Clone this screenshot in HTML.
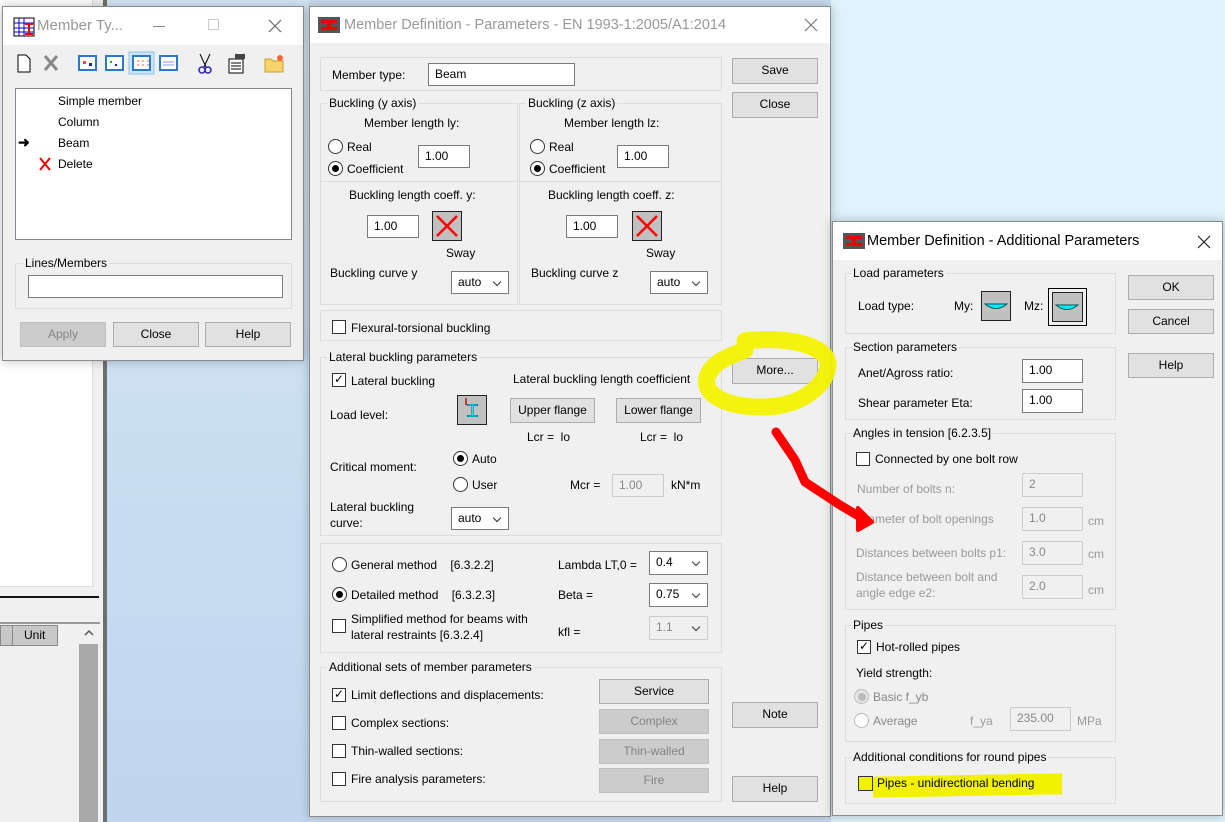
<!DOCTYPE html>
<html><head><meta charset="utf-8"><style>
*{box-sizing:border-box;margin:0;padding:0}
body{width:1225px;height:822px;position:relative;overflow:hidden;font-family:"Liberation Sans",Tahoma,sans-serif;font-size:12px;color:#000;background:#dff3fc}
.a{position:absolute}
.t{position:absolute;white-space:nowrap;line-height:14px}
.g{position:absolute;border:1px solid #dcdcdc}
.lg{position:absolute;background:#f0f0f0;padding:0 2px;line-height:14px;white-space:nowrap}
.in{position:absolute;background:#fff;border:1px solid #7a7a7a;line-height:20px;padding-left:6px}
.dis{background:#f0f0f0;border-color:#ccc;color:#888}
.btn{position:absolute;background:#e1e1e1;border:1px solid #adadad;text-align:center;line-height:22px}
.bd{background:#cccccc;border-color:#bfbfbf;color:#838383}
.cb{position:absolute;width:14px;height:14px;border:1px solid #333;background:#fff}
.rb{position:absolute;width:15px;height:15px;border:1px solid #333;border-radius:50%;background:#fff}
.rb.on::after{content:"";position:absolute;left:3px;top:3px;width:7px;height:7px;border-radius:50%;background:#000}
.sel{position:absolute;background:#fff;border:1px solid #7a7a7a;line-height:21px;padding-left:6px}
.sel::after{content:"";position:absolute;right:8px;top:7px;width:5px;height:5px;border-right:1px solid #333;border-bottom:1px solid #333;transform:rotate(45deg)}
.dlg{position:absolute;background:#f0f0f0;border:1px solid #8c8c8c;box-shadow:0 0 10px rgba(0,0,0,.25)}
.tb{position:absolute;left:0;right:0;top:0;background:#fff}
</style></head><body>
<!-- background -->
<div class="a" style="left:0;top:0;width:107px;height:822px;background:#f0f0f0"></div>
<div class="a" style="left:0;top:0;width:93px;height:587px;background:#fff;border-right:1px solid #ddd;border-bottom:1px solid #ddd"></div>
<div class="a" style="left:0;top:596px;width:99px;height:2px;background:#111"></div>
<div class="a" style="left:0;top:622px;width:100px;height:2px;background:#999"></div>
<div class="a" style="left:0;top:625px;width:58px;height:21px;background:#c8c8c8;border:1px solid #888"></div>
<div class="t" style="left:24px;top:628px">Unit</div>
<div class="a" style="left:12px;top:625px;width:1px;height:21px;background:#888"></div>
<div class="a" style="left:79px;top:625px;width:19px;height:197px;background:#f0f0f0"></div>
<div class="a" style="left:79px;top:644px;width:19px;height:178px;background:#a8a8a8"></div>
<svg class="a" style="left:83px;top:628px" width="12" height="10"><path d="M2 7L6 3L10 7" fill="none" stroke="#555" stroke-width="1.5"/></svg>
<div class="a" style="left:103px;top:0;width:4px;height:822px;background:#6f6f6f"></div>
<div class="a" style="left:107px;top:0;width:202px;height:822px;background:linear-gradient(#d6e9f6,#c0d5ee)"></div>
<div class="a" style="left:309px;top:0;width:522px;height:822px;background:#c9dcee"></div>

<!-- left dialog -->
<div class="dlg" style="left:2px;top:6px;width:302px;height:355px">
<div class="tb" style="height:38px"></div>
<svg class="a" style="left:10px;top:10px" width="22" height="20"><rect x="1" y="1" width="20" height="18" fill="#fff" stroke="#000"/><path d="M1 6H21M1 11H21M1 15H21M6 1V19M11 1V19" stroke="#00c" /><path d="M12 7H20M16 7V17M12 17H20" stroke="#e00" stroke-width="2"/></svg>
<div class="t" style="left:34px;top:12px;font-size:15px;color:#999">Member Ty...</div>
<div class="a" style="left:150px;top:19px;width:12px;height:1px;background:#888"></div>
<div class="a" style="left:205px;top:12px;width:11px;height:11px;border:1px solid #ccc"></div>
<svg class="a" style="left:265px;top:12px" width="14" height="14"><path d="M1 1L13 13M13 1L1 13" stroke="#666" stroke-width="1.2"/></svg>
<svg class="a" style="left:12px;top:44px" width="270" height="24">
<path d="M3 4H11L15 8V21H3Z" fill="#fff" stroke="#000"/>
<path d="M30 5L42 19M42 5L30 19" stroke="#888" stroke-width="3"/>
<rect x="64" y="5" width="17" height="14" fill="#fff" stroke="#2a78d0" stroke-width="2"/><rect x="68" y="10" width="3" height="3" fill="#e44"/><rect x="74" y="12" width="3" height="3" fill="#22b"/>
<rect x="91" y="5" width="17" height="14" fill="#fff" stroke="#2a78d0" stroke-width="2"/><rect x="95" y="10" width="2" height="2" fill="#2a2"/><rect x="100" y="13" width="2" height="2" fill="#22b"/>
<rect x="114" y="1" width="25" height="22" fill="#cde6f7" stroke="#8cc4ec"/><rect x="118" y="5" width="17" height="14" fill="#fff" stroke="#2a78d0" stroke-width="2"/><path d="M122 10h2m3 0h2m3 0h2M122 14h2m3 0h2m3 0h2" stroke="#e63"/>
<rect x="145" y="5" width="17" height="14" fill="#fff" stroke="#2a78d0" stroke-width="2"/><path d="M148 11H159M148 14H159" stroke="#99c"/>
<path d="M185 3L191 16M195 3L189 16" stroke="#000"/><circle cx="187" cy="19" r="3" fill="none" stroke="#22b" stroke-width="1.5"/><circle cx="193" cy="19" r="3" fill="none" stroke="#22b" stroke-width="1.5"/>
<rect x="214" y="8" width="14" height="14" fill="#fff" stroke="#000"/><path d="M216 12h10M216 15h10M216 18h10" stroke="#000"/><rect x="220" y="3" width="10" height="5" fill="#444"/>
<path d="M250 8h6l2 2h10v11h-18z" fill="#f7d46b" stroke="#c9a02a"/><circle cx="265" cy="7" r="3" fill="#f63"/>
</svg>
<div class="a" style="left:12px;top:81px;width:277px;height:152px;background:#fff;border:1px solid #828790"></div>
<div class="t" style="left:55px;top:87px">Simple member</div>
<div class="t" style="left:55px;top:108px">Column</div>
<div class="t" style="left:55px;top:129px">Beam</div>
<div class="t" style="left:15px;top:128px;font-size:14px;font-weight:bold">➜</div>
<svg class="a" style="left:35px;top:150px" width="14" height="14"><path d="M2 1L12 13M12 1L2 13" stroke="#e00" stroke-width="2"/></svg>
<div class="t" style="left:55px;top:150px">Delete</div>
<div class="g" style="left:12px;top:256px;width:277px;height:46px"></div>
<div class="lg" style="left:20px;top:249px">Lines/Members</div>
<div class="in" style="left:25px;top:268px;width:255px;height:23px"></div>
<div class="btn bd" style="left:17px;top:315px;width:86px;height:25px">Apply</div>
<div class="btn" style="left:110px;top:315px;width:86px;height:25px">Close</div>
<div class="btn" style="left:202px;top:315px;width:86px;height:25px">Help</div>
</div>

<!-- main dialog -->
<div class="dlg" style="left:309px;top:6px;width:522px;height:811px">
<div class="tb" style="height:36px"></div>
<svg class="a" style="left:8px;top:10px" width="22" height="16"><rect width="22" height="16" fill="#555"/><path d="M3 3H19V6H13V10H19V13H3V10H9V6H3Z" fill="#e00"/></svg>
<div class="t" style="left:34px;top:11px;font-size:14.5px;color:#999">Member Definition - Parameters - EN 1993-1:2005/A1:2014</div>
<svg class="a" style="left:494px;top:11px" width="14" height="14"><path d="M1 1L13 13M13 1L1 13" stroke="#777" stroke-width="1.2"/></svg>
</div>
<div class="g" style="left:320px;top:57px;width:402px;height:34px"></div>
<div class="t" style="left:332px;top:68px">Member type:</div>
<div class="in" style="left:428px;top:63px;width:147px;height:23px;line-height:21px">Beam</div>
<div class="btn" style="left:732px;top:58px;width:86px;height:26px">Save</div>
<div class="btn" style="left:732px;top:92px;width:86px;height:26px">Close</div>

<div class="g" style="left:320px;top:103px;width:198px;height:202px"></div>
<div class="a" style="left:320px;top:181px;width:198px;height:1px;background:#dcdcdc"></div>
<div class="lg" style="left:327px;top:96px">Buckling (y axis)</div>
<div class="t" style="left:364px;top:116px">Member length ly:</div>
<div class="rb" style="left:328px;top:139px"></div><div class="t" style="left:347px;top:140px">Real</div>
<div class="rb on" style="left:328px;top:161px"></div><div class="t" style="left:347px;top:162px">Coefficient</div>
<div class="in" style="left:418px;top:145px;width:52px;height:23px">1.00</div>
<div class="t" style="left:349px;top:188px">Buckling length coeff. y:</div>
<div class="in" style="left:367px;top:215px;width:52px;height:23px">1.00</div>
<div class="a" style="left:432px;top:211px;width:30px;height:30px;background:#c0c0c0;border:1px solid #222"></div>
<svg class="a" style="left:432px;top:211px" width="30" height="30"><path d="M5 5L25 25M25 5L5 25" stroke="#f00" stroke-width="2.5"/></svg>
<div class="t" style="left:446px;top:246px">Sway</div>
<div class="t" style="left:330px;top:266px">Buckling curve y</div>
<div class="sel" style="left:451px;top:271px;width:58px;height:23px">auto</div>

<div class="g" style="left:519px;top:103px;width:203px;height:202px"></div>
<div class="a" style="left:519px;top:181px;width:203px;height:1px;background:#dcdcdc"></div>
<div class="lg" style="left:526px;top:96px">Buckling (z axis)</div>
<div class="t" style="left:564px;top:116px">Member length lz:</div>
<div class="rb" style="left:530px;top:139px"></div><div class="t" style="left:549px;top:140px">Real</div>
<div class="rb on" style="left:530px;top:161px"></div><div class="t" style="left:549px;top:162px">Coefficient</div>
<div class="in" style="left:617px;top:145px;width:52px;height:23px">1.00</div>
<div class="t" style="left:548px;top:188px">Buckling length coeff. z:</div>
<div class="in" style="left:566px;top:215px;width:52px;height:23px">1.00</div>
<div class="a" style="left:632px;top:211px;width:30px;height:30px;background:#c0c0c0;border:1px solid #222"></div>
<svg class="a" style="left:632px;top:211px" width="30" height="30"><path d="M5 5L25 25M25 5L5 25" stroke="#f00" stroke-width="2.5"/></svg>
<div class="t" style="left:646px;top:246px">Sway</div>
<div class="t" style="left:531px;top:266px">Buckling curve z</div>
<div class="sel" style="left:650px;top:271px;width:58px;height:23px">auto</div>

<div class="g" style="left:320px;top:310px;width:402px;height:31px"></div>
<div class="cb" style="left:332px;top:320px"></div><div class="t" style="left:351px;top:321px">Flexural-torsional buckling</div>

<div class="g" style="left:320px;top:357px;width:402px;height:179px"></div>
<div class="lg" style="left:327px;top:350px">Lateral buckling parameters</div>
<div class="cb" style="left:332px;top:373px"></div><div class="t" style="left:334px;top:372px;font-size:12px">✓</div><div class="t" style="left:351px;top:374px">Lateral buckling</div>
<div class="t" style="left:513px;top:372px">Lateral buckling length coefficient</div>
<div class="t" style="left:330px;top:408px">Load level:</div>
<div class="a" style="left:457px;top:395px;width:30px;height:30px;background:#c0c0c0;border:1px solid #222"></div>
<svg class="a" style="left:457px;top:395px" width="30" height="30"><path d="M9 3V10" stroke="#e00" stroke-width="1.5"/><path d="M10 10H21M15.5 10V21M10 21H21" stroke="#069" stroke-width="2"/><path d="M11 10H20M15.5 10V21M11 21H20" stroke="#0ee" stroke-width="1"/></svg>
<div class="btn" style="left:510px;top:398px;width:85px;height:25px">Upper flange</div>
<div class="btn" style="left:616px;top:398px;width:85px;height:25px">Lower flange</div>
<div class="t" style="left:527px;top:430px">Lcr =&nbsp; lo</div>
<div class="t" style="left:640px;top:430px">Lcr =&nbsp; lo</div>
<div class="t" style="left:330px;top:460px">Critical moment:</div>
<div class="rb on" style="left:453px;top:451px"></div><div class="t" style="left:472px;top:452px">Auto</div>
<div class="rb" style="left:453px;top:477px"></div><div class="t" style="left:472px;top:478px">User</div>
<div class="t" style="left:570px;top:478px">Mcr =</div>
<div class="in dis" style="left:612px;top:474px;width:52px;height:23px">1.00</div>
<div class="t" style="left:671px;top:478px">kN*m</div>
<div class="t" style="left:330px;top:500px">Lateral buckling</div>
<div class="t" style="left:330px;top:516px">curve:</div>
<div class="sel" style="left:451px;top:507px;width:58px;height:23px">auto</div>

<div class="g" style="left:320px;top:543px;width:402px;height:110px"></div>
<div class="rb" style="left:332px;top:557px"></div><div class="t" style="left:351px;top:558px">General method&nbsp;&nbsp;&nbsp;&nbsp;[6.3.2.2]</div>
<div class="t" style="left:558px;top:558px">Lambda LT,0 =</div>
<div class="sel" style="left:649px;top:551px;width:59px;height:24px">0.4</div>
<div class="rb on" style="left:332px;top:587px"></div><div class="t" style="left:351px;top:588px">Detailed method&nbsp;&nbsp;&nbsp;&nbsp;[6.3.2.3]</div>
<div class="t" style="left:558px;top:588px">Beta =</div>
<div class="sel" style="left:649px;top:583px;width:59px;height:24px">0.75</div>
<div class="cb" style="left:332px;top:619px"></div>
<div class="t" style="left:351px;top:612px">Simplified method for beams with</div>
<div class="t" style="left:351px;top:628px">lateral restraints [6.3.2.4]</div>
<div class="t" style="left:558px;top:625px">kfl =</div>
<div class="sel" style="left:649px;top:616px;width:59px;height:24px;border-color:#ccc;color:#888;background:#f0f0f0">1.1</div>

<div class="g" style="left:320px;top:667px;width:402px;height:135px"></div>
<div class="lg" style="left:327px;top:660px">Additional sets of member parameters</div>
<div class="cb" style="left:332px;top:688px"></div><div class="t" style="left:334px;top:687px">✓</div><div class="t" style="left:351px;top:688px">Limit deflections and displacements:</div>
<div class="cb" style="left:332px;top:716px"></div><div class="t" style="left:351px;top:716px">Complex sections:</div>
<div class="cb" style="left:332px;top:744px"></div><div class="t" style="left:351px;top:744px">Thin-walled sections:</div>
<div class="cb" style="left:332px;top:772px"></div><div class="t" style="left:351px;top:772px">Fire analysis parameters:</div>
<div class="btn" style="left:599px;top:679px;width:110px;height:25px">Service</div>
<div class="btn bd" style="left:599px;top:709px;width:110px;height:25px">Complex</div>
<div class="btn bd" style="left:599px;top:739px;width:110px;height:25px">Thin-walled</div>
<div class="btn bd" style="left:599px;top:768px;width:110px;height:25px">Fire</div>
<div class="btn" style="left:732px;top:358px;width:86px;height:26px">More...</div>
<div class="btn" style="left:732px;top:702px;width:86px;height:26px">Note</div>
<div class="btn" style="left:732px;top:776px;width:86px;height:26px">Help</div>

<!-- additional dialog -->
<div class="dlg" style="left:832px;top:221px;width:391px;height:595px">
<div class="tb" style="height:38px"></div>
<svg class="a" style="left:10px;top:11px" width="22" height="16"><rect width="22" height="16" fill="#555"/><path d="M3 3H19V6H13V10H19V13H3V10H9V6H3Z" fill="#e00"/></svg>
<div class="t" style="left:34px;top:12px;font-size:14.5px">Member Definition - Additional Parameters</div>
<svg class="a" style="left:364px;top:13px" width="14" height="14"><path d="M1 1L13 13M13 1L1 13" stroke="#222" stroke-width="1.2"/></svg>
</div>
<div class="g" style="left:845px;top:273px;width:271px;height:61px"></div>
<div class="lg" style="left:851px;top:266px">Load parameters</div>
<div class="t" style="left:858px;top:299px">Load type:</div>
<div class="t" style="left:954px;top:299px">My:</div>
<div class="a" style="left:981px;top:291px;width:30px;height:30px;background:#c0c0c0;border:1px solid #222"></div>
<svg class="a" style="left:981px;top:291px" width="30" height="30"><path d="M4 13H26Q15 22 4 13Z" fill="#0ef" stroke="#055"/></svg>
<div class="t" style="left:1024px;top:299px">Mz:</div>
<div class="a" style="left:1048px;top:288px;width:39px;height:38px;border:1px solid #000"></div>
<div class="a" style="left:1052px;top:292px;width:31px;height:30px;background:#c0c0c0;border:1px solid #222"></div>
<svg class="a" style="left:1052px;top:292px" width="30" height="30"><path d="M4 13H26Q15 22 4 13Z" fill="#0ef" stroke="#055"/></svg>
<div class="btn" style="left:1128px;top:275px;width:86px;height:25px">OK</div>
<div class="btn" style="left:1128px;top:309px;width:86px;height:25px">Cancel</div>
<div class="btn" style="left:1128px;top:353px;width:86px;height:25px">Help</div>

<div class="g" style="left:845px;top:347px;width:271px;height:73px"></div>
<div class="lg" style="left:851px;top:340px">Section parameters</div>
<div class="t" style="left:858px;top:366px">Anet/Agross ratio:</div>
<div class="in" style="left:1022px;top:359px;width:61px;height:24px">1.00</div>
<div class="t" style="left:858px;top:396px">Shear parameter Eta:</div>
<div class="in" style="left:1022px;top:389px;width:61px;height:24px">1.00</div>

<div class="g" style="left:845px;top:433px;width:271px;height:177px"></div>
<div class="lg" style="left:851px;top:426px">Angles in tension [6.2.3.5]</div>
<div class="cb" style="left:856px;top:452px"></div><div class="t" style="left:875px;top:452px">Connected by one bolt row</div>
<div class="t" style="left:857px;top:482px;color:#999">Number of bolts n:</div>
<div class="in dis" style="left:1022px;top:473px;width:61px;height:24px">2</div>
<div class="t" style="left:857px;top:512px;color:#999">Diameter of bolt openings</div>
<div class="in dis" style="left:1022px;top:507px;width:61px;height:24px">1.0</div><div class="t" style="left:1088px;top:514px;color:#999">cm</div>
<div class="t" style="left:856px;top:546px;color:#999">Distances between bolts p1:</div>
<div class="in dis" style="left:1022px;top:541px;width:61px;height:24px">3.0</div><div class="t" style="left:1088px;top:547px;color:#999">cm</div>
<div class="t" style="left:856px;top:570px;color:#999">Distance between bolt and</div>
<div class="t" style="left:856px;top:586px;color:#999">angle edge e2:</div>
<div class="in dis" style="left:1022px;top:575px;width:61px;height:24px">2.0</div><div class="t" style="left:1088px;top:583px;color:#999">cm</div>

<div class="g" style="left:845px;top:625px;width:271px;height:117px"></div>
<div class="lg" style="left:851px;top:618px">Pipes</div>
<div class="cb" style="left:857px;top:640px"></div><div class="t" style="left:859px;top:639px">✓</div><div class="t" style="left:876px;top:640px">Hot-rolled pipes</div>
<div class="t" style="left:856px;top:666px">Yield strength:</div>
<div class="rb" style="left:854px;top:689px;border-color:#bbb;background:#e6e6e6"></div><div class="a" style="left:858px;top:693px;width:8px;height:8px;border-radius:50%;background:#bbb"></div>
<div class="t" style="left:873px;top:690px;color:#888">Basic f_yb</div>
<div class="rb" style="left:854px;top:713px;border-color:#bbb"></div><div class="t" style="left:873px;top:714px;color:#888">Average</div>
<div class="t" style="left:970px;top:714px;color:#999">f_ya</div>
<div class="in dis" style="left:1010px;top:707px;width:61px;height:24px">235.00</div>
<div class="t" style="left:1077px;top:714px;color:#999">MPa</div>

<div class="g" style="left:845px;top:757px;width:271px;height:47px"></div>
<div class="lg" style="left:851px;top:750px">Additional conditions for round pipes</div>
<div class="a" style="left:873px;top:775px;width:189px;height:21px;background:#f2f200;transform:skewY(-1deg)"></div>
<div class="a" style="left:858px;top:776px;width:15px;height:15px;border:1px solid #333;background:#f2f200"></div>
<div class="t" style="left:877px;top:776px">Pipes - unidirectional bending</div>

<!-- annotations -->
<svg class="a" style="left:0;top:0" width="1225" height="822">
<path d="M745 341C790 336 826 346 828 363C829 381 806 406 765 407C724 408 703 393 707 378C711 362 730 356 745 350" fill="none" stroke="#f2f200" stroke-width="17" stroke-linecap="round" opacity="0.95"/>
<path d="M776 432L795 460L805 482L840 505L862 518" fill="none" stroke="#f00" stroke-width="9" stroke-linecap="round" stroke-linejoin="round"/>
<path d="M858 508L872 522L858 530Z" fill="#f00" stroke="#f00" stroke-width="4" stroke-linejoin="round"/>
</svg>
</body></html>
